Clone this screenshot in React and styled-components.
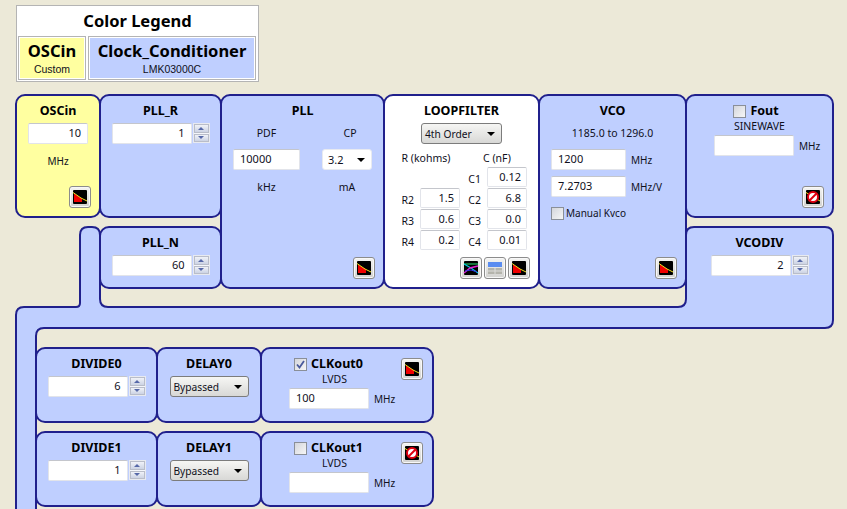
import React from "react";
import styled, { createGlobalStyle } from "styled-components";

const Global = createGlobalStyle`
  html, body { margin: 0; padding: 0; background: #ece9d8; }
  body { font-family: "Noto Sans", "DejaVu Sans", sans-serif; font-size: 10.5px; color: #10101c; }
`;

const Page = styled.div`
  width: 847px; height: 509px; overflow: hidden; box-sizing: border-box;
  padding: 5px 0 0 15px; position: relative;
`;

/* Legend */
const Legend = styled.div`
  width: 243px; height: 77px; box-sizing: border-box; background: #fff; margin-left: 1px;
  border: 1px solid #b4b4b4; display: flex; flex-direction: column; align-items: stretch;
`;
const LegendTitle = styled.div`
  font-weight: 700; font-size: 16.5px; line-height: 20px; text-align: center; height: 30px; padding-top: 5px; box-sizing: border-box; color: #000;
`;
const LegendRow = styled.div`
  display: flex; gap: 2px; padding: 0 1px;
`;
const LegendCell = styled.div`
  width: ${p => p.$w}px; height: 44px; box-sizing: border-box; border: 1px solid #b4b4b4;
  outline: 1px solid #fff; outline-offset: -2px;
  background: ${p => p.$bg}; display: flex; flex-direction: column; align-items: center; padding-top: 5px;
`;
const LegendName = styled.div`font-weight: 700; font-size: 16.5px; line-height: 18px; color: #000;`;
const LegendSub = styled.div`font-family: "Liberation Sans", sans-serif; font-size: 10.5px; line-height: 12px; margin-top: 3px;`;

/* Diagram */
const Diagram = styled.div`position: relative; margin-top: 12px;`;
const Bus = styled.svg`position: absolute; left: -15px; top: -94px; width: 847px; height: 509px; z-index: 0;`;

const TopGrid = styled.div`
  position: relative; z-index: 1; display: grid;
  grid-template-columns: 84px 121px 163px 155px 147px 147px;
  grid-template-rows: 124px 63px; row-gap: 8px;
  grid-template-areas:
    "osc pllr pll loop vco fout"
    ". plln pll loop vco div";
`;
const OutGrid = styled.div`
  position: relative; z-index: 1; display: grid; margin: 58px 0 0 20px;
  grid-template-columns: 121px 104px 172px;
  grid-auto-rows: 76px; row-gap: 8px;
`;

const Panel = styled.section`
  grid-area: ${p => p.$area || "auto"};
  margin-right: -2px; box-sizing: border-box; min-width: 0;
  border: 2px solid ${p => (p.$ghost ? "transparent" : "#20208c")}; border-radius: 10px;
  background: ${p => (p.$ghost ? "transparent" : p.$bg || "#bfcfff")};
  display: flex; flex-direction: column; align-items: center;
  padding: 7px 0 8px;
`;
const Title = styled.div`
  font-weight: 700; font-size: 12.5px; line-height: 16px; color: #000; height: 16px; margin-bottom: 4px; white-space: nowrap;
`;
const Label = styled.div`
  line-height: 14px; margin-top: ${p => p.$mt || 0}px; margin-left: ${p => p.$ml || 0}px; white-space: nowrap;
`;
const Suffix = styled.span`font-size: 10px; line-height: 14px; white-space: nowrap;`;
const Foot = styled.div`
  margin-top: auto; align-self: flex-end; padding-right: 8px; display: flex; gap: 2px;
`;

const Field = styled.div`
  width: ${p => p.$w}px; height: 21px; box-sizing: border-box; background: #fff;
  border: 1px solid #e2e4ea; border-top-color: #c4c6cc; border-radius: 2px;
  line-height: 18px; font-size: 11px;
  text-align: ${p => p.$left ? "left" : "right"}; padding: 0 6px; white-space: nowrap;
`;

const SpinRow = styled.div`display: flex; gap: 1px;`;
const SpinBox = styled.div`
  width: 17px; height: 20px; box-sizing: border-box; background: #f4f6fb; border: 1px solid #e8eaf0;
  display: flex; flex-direction: column; gap: 1px;
`;
const SpinKey = styled.div`
  flex: 1; box-sizing: border-box; border: 1px solid #b9bdc9; background: linear-gradient(#f0f2f8, #ccd3e4);
  display: flex; align-items: center; justify-content: center;
  &::after {
    content: ""; border-left: 3px solid transparent; border-right: 3px solid transparent;
    ${p => p.$down ? "border-top: 3px solid #5668a8;" : "border-bottom: 3px solid #5668a8;"}
  }
`;
const Spinner = ({ value, w = 80 }) => (
  <SpinRow>
    <Field $w={w}>{value}</Field>
    <SpinBox><SpinKey /><SpinKey $down /></SpinBox>
  </SpinRow>
);

const Drop = styled.div`
  width: ${p => p.$w}px; height: 21px; box-sizing: border-box; border-radius: 3px;
  border: 1px solid ${p => p.$flat ? "#e8eaf0" : "#7c7c7c"};
  background: ${p => p.$flat ? "#fff" : "linear-gradient(#f6f6f4, #d8d8d6)"};
  display: flex; align-items: center; justify-content: space-between; padding: 0 6px 0 ${p => p.$flat ? 5 : 3}px;
  font-size: ${p => p.$flat ? 11 : 10.2}px; line-height: 18px; white-space: nowrap; color: #10101c;
  &::after { content: ""; border-left: 4px solid transparent; border-right: 4px solid transparent; border-top: 4px solid #000; }
`;

const Box = styled.span`
  width: 13px; height: 13px; box-sizing: border-box; display: inline-flex; align-items: center; justify-content: center;
  border: 1px solid #8a8f98; background: linear-gradient(135deg, #d4d6dc, #f6f6f6); flex: none;
`;
const Check = ({ on }) => (
  <Box>{on && <svg width="9" height="9" viewBox="0 0 9 9"><path d="M1 4.5 L3.5 7.5 L8 1" fill="none" stroke="#4a5a9c" strokeWidth="1.8" /></svg>}</Box>
);
const CheckLine = styled.div`display: flex; align-items: center; gap: 4px; margin-left: ${p => p.$ml || 0}px;`;
const CheckTitle = styled.span`font-weight: 700; font-size: 12.5px; line-height: 16px; color: #000;`;

const IconBtn = styled.div`
  width: 22px; height: 22px; box-sizing: border-box; border: 1px solid #8c8c8c; border-radius: 3px;
  box-shadow: inset 0 0 0 1px #f8f8f8;
  background: linear-gradient(#f4f4f2, #d2d2d0); display: flex; align-items: center; justify-content: center; flex: none;
`;
const Graph = () => (
  <IconBtn><svg width="16" height="16" viewBox="0 0 16 16">
    <rect x="1" y="1" width="14" height="14" rx="1" fill="#000" />
    <path d="M2 4.5 L10 9.5 L10 13 L2 13 Z" fill="#f00000" />
    <path d="M1 3.5 L9 9 L15 12" fill="none" stroke="#f2e020" strokeWidth="1" />
  </svg></IconBtn>
);
const GraphOff = () => (
  <IconBtn><svg width="16" height="16" viewBox="0 0 16 16">
    <rect x="1" y="1" width="14" height="14" rx="1" fill="#000" />
    <path d="M1 3.5 L15 12" stroke="#f2e020" strokeWidth="1" />
    <circle cx="8" cy="8" r="5" fill="#fff" stroke="#e00010" strokeWidth="2" />
    <path d="M4.5 11.5 L11.5 4.5" stroke="#e00010" strokeWidth="2" />
  </svg></IconBtn>
);
const Sweep = () => (
  <IconBtn><svg width="16" height="16" viewBox="0 0 16 16">
    <rect x="1" y="1" width="14" height="14" rx="1" fill="#000" />
    <path d="M1 4 L15 4" stroke="#20c060" strokeWidth="1.2" />
    <path d="M1 4 L8 8 L15 13" fill="none" stroke="#00c8e0" strokeWidth="1.2" />
    <path d="M1 13 L7 8 L15 6" fill="none" stroke="#e020d0" strokeWidth="1.4" />
    <path d="M2 11 L8 10 L14 12" fill="none" stroke="#3030e0" strokeWidth="1" />
  </svg></IconBtn>
);
const Table = () => (
  <IconBtn><svg width="16" height="16" viewBox="0 0 16 16">
    <rect x="1" y="2" width="14" height="5" fill="#5a8cf0" />
    <rect x="1" y="8" width="6.5" height="2.5" fill="#b4b4ac" />
    <rect x="8.5" y="8" width="6.5" height="2.5" fill="#b4b4ac" />
    <rect x="1" y="11.5" width="6.5" height="2.5" fill="#b4b4ac" />
    <rect x="8.5" y="11.5" width="6.5" height="2.5" fill="#b4b4ac" />
  </svg></IconBtn>
);

/* PLL */
const PairGrid = styled.div`
  display: grid; grid-template-columns: 67px 50px; grid-template-rows: 14px 21px 15px; column-gap: 22px; row-gap: 9px;
  justify-items: center; align-items: end; margin-top: 3px;
`;
const PairText = styled.div`line-height: 14px; height: 14px; white-space: nowrap; padding-left: ${p => p.$pl || 0}px;`;

/* Loop filter */
const FilterHead = styled.div`
  display: grid; grid-template-columns: 82px 60px; justify-items: center; margin-top: 7px; line-height: 14px; align-self: flex-start;
`;
const FilterGrid = styled.div`
  display: grid; grid-template-columns: 33px 40px 27px 40px; grid-auto-rows: 20px; row-gap: 1px; margin-top: 2px;
  align-items: center; align-self: flex-start; margin-left: 2px;
`;
const FilterTag = styled.div`text-align: right; padding-right: 6px; line-height: 14px; padding-top: 3px;`;
const FilterField = styled(Field)`height: 20px; padding: 0 5px;`;

/* VCO */
const FieldLine = styled.div`display: flex; align-items: center; gap: 5px; margin-bottom: 6px;`;
const VcoStack = styled.div`display: flex; flex-direction: column; margin-top: 9px; margin-left: 3px; width: 126px;`;
const CheckText = styled.div`display: flex; align-items: center; gap: 2px; line-height: 14px; margin-top: 3px; font-size: 10px;`;

/* Clock out */
const ClockBody = styled.div`
  display: flex; gap: 6px; align-items: flex-start; padding-left: 27px; align-self: flex-start;
`;
const ClockCol = styled.div`display: flex; flex-direction: column; align-items: flex-start; width: 106px;`;
const Unit = styled.div`
  display: flex; align-items: center; gap: 5px; white-space: nowrap; margin-top: ${p => p.$mt || 0}px;
  ${p => p.$start ? `align-self: flex-start; margin-left: ${p.$start}px;` : ""}
`;
const ClockBtn = styled.div`margin-top: 2px;`;

const Clock = ({ name, on, value }) => (
  <Panel>
    <ClockBody>
      <ClockCol>
        <CheckLine $ml={5}><Check on={on} /><CheckTitle>{name}</CheckTitle></CheckLine>
        <Label $ml={33}>LVDS</Label>
        <Unit $mt={2}>
          <Field $w={80} $left>{value}</Field>
          <Suffix>MHz</Suffix>
        </Unit>
      </ClockCol>
      <ClockBtn>{on ? <Graph /> : <GraphOff />}</ClockBtn>
    </ClockBody>
  </Panel>
);

export default function App() {
  return (
    <Page>
      <Global />
      <Legend>
        <LegendTitle>Color Legend</LegendTitle>
        <LegendRow>
          <LegendCell $w={68} $bg="#ffffa0"><LegendName>OSCin</LegendName><LegendSub>Custom</LegendSub></LegendCell>
          <LegendCell $w={168} $bg="#bfcfff"><LegendName>Clock_Conditioner</LegendName><LegendSub>LMK03000C</LegendSub></LegendCell>
        </LegendRow>
      </Legend>
      <Diagram>
        <Bus viewBox="0 0 847 509">
          <path
            d="M80 235 Q80 227 88 227 L92 227 Q100 227 100 235 L100 299 Q100 307 108 307 L678 307 Q686 307 686 299 L686 235 Q686 227 694 227 L825 227 Q833 227 833 235 L833 320 Q833 328 825 328 L44 328 Q36 328 36 336 L36 530 L16 530 L16 315 Q16 307 24 307 L76 307 Q80 307 80 303 Z"
            fill="#bfcfff" stroke="#20208c" strokeWidth="2"
          />
        </Bus>
        <TopGrid>
          <Panel $area="osc" $bg="#ffffa0">
            <Title>OSCin</Title>
            <Field $w={60}>10</Field>
            <Label $mt={10}><Suffix>MHz</Suffix></Label>
            <Foot><Graph /></Foot>
          </Panel>
          <Panel $area="pllr">
            <Title>PLL_R</Title>
            <Spinner value="1" />
          </Panel>
          <Panel $area="pll">
            <Title>PLL</Title>
            <PairGrid>
              <PairText>PDF</PairText><PairText $pl={6}>CP</PairText>
              <Field $w={67} $left>10000</Field><Drop $w={50} $flat>3.2</Drop>
              <PairText>kHz</PairText><PairText>mA</PairText>
            </PairGrid>
            <Foot><Graph /></Foot>
          </Panel>
          <Panel $area="loop" $bg="#fff">
            <Title>LOOPFILTER</Title>
            <Drop $w={81}>4th Order</Drop>
            <FilterHead><span>R (kohms)</span><span>C (nF)</span></FilterHead>
            <FilterGrid>
              <span /><span /><FilterTag>C1</FilterTag><FilterField $w={40}>0.12</FilterField>
              <FilterTag>R2</FilterTag><FilterField $w={40}>1.5</FilterField><FilterTag>C2</FilterTag><FilterField $w={40}>6.8</FilterField>
              <FilterTag>R3</FilterTag><FilterField $w={40}>0.6</FilterField><FilterTag>C3</FilterTag><FilterField $w={40}>0.0</FilterField>
              <FilterTag>R4</FilterTag><FilterField $w={40}>0.2</FilterField><FilterTag>C4</FilterTag><FilterField $w={40}>0.01</FilterField>
            </FilterGrid>
            <Foot><Sweep /><Table /><Graph /></Foot>
          </Panel>
          <Panel $area="vco">
            <Title>VCO</Title>
            <Label $mt={3}>1185.0 to 1296.0</Label>
            <VcoStack>
              <FieldLine><Field $w={75} $left>1200</Field><Suffix>MHz</Suffix></FieldLine>
              <FieldLine><Field $w={75} $left>7.2703</Field><Suffix>MHz/V</Suffix></FieldLine>
              <CheckText><Check /><span>Manual Kvco</span></CheckText>
            </VcoStack>
            <Foot><Graph /></Foot>
          </Panel>
          <Panel $area="fout">
            <CheckLine $ml={-7}><Check /><CheckTitle>Fout</CheckTitle></CheckLine>
            <Label>SINEWAVE</Label>
            <Unit $mt={2} $start={27}><Field $w={80} /><Suffix>MHz</Suffix></Unit>
            <Foot><GraphOff /></Foot>
          </Panel>
          <Panel $area="plln">
            <Title>PLL_N</Title>
            <Spinner value="60" />
          </Panel>
          <Panel $area="div" $ghost>
            <Title>VCODIV</Title>
            <Spinner value="2" />
          </Panel>
        </TopGrid>
        <OutGrid>
          <Panel><Title>DIVIDE0</Title><Spinner value="6" /></Panel>
          <Panel><Title>DELAY0</Title><Drop $w={79}>Bypassed</Drop></Panel>
          <Clock name="CLKout0" on value="100" />
          <Panel><Title>DIVIDE1</Title><Spinner value="1" /></Panel>
          <Panel><Title>DELAY1</Title><Drop $w={79}>Bypassed</Drop></Panel>
          <Clock name="CLKout1" />
        </OutGrid>
      </Diagram>
    </Page>
  );
}
